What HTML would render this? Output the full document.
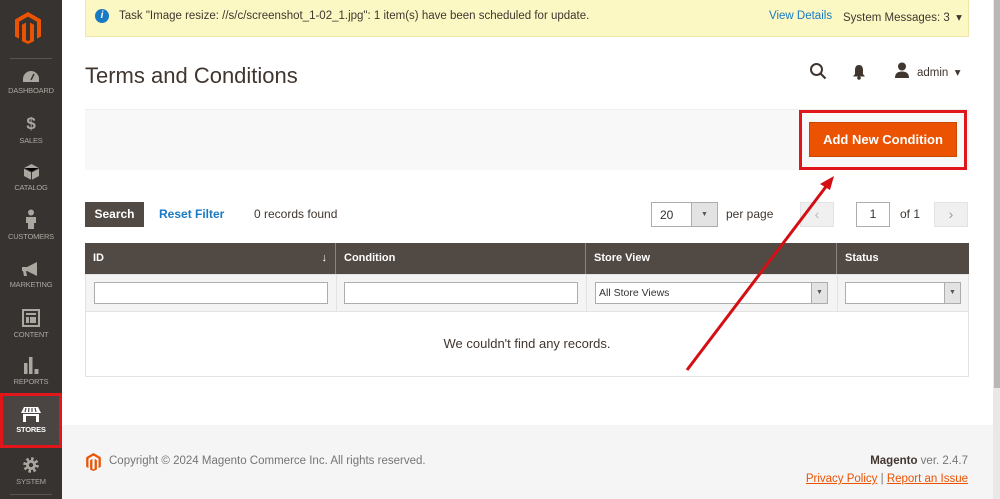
<!DOCTYPE html>
<html><head><meta charset="utf-8"><style>
*{margin:0;padding:0;box-sizing:border-box}
body{width:1000px;height:499px;overflow:hidden;background:#fff;font-family:"Liberation Sans",sans-serif;position:relative;color:#333}
.a{position:absolute}
#side{left:0;top:0;width:62px;height:499px;background:#373330}
.nav{position:absolute;left:0;width:62px;text-align:center;color:#aaa6a0;font-size:7.5px;letter-spacing:-0.2px}
.nav svg{display:block;margin:0 auto 3px}
.hd{top:243px;height:31px;background:#514943;color:#fff;font-size:11px;font-weight:bold;line-height:31px;padding-left:8px;border-right:1px solid #8a837f}
.inp{background:#fff;border:1px solid #adadad;height:22px}
.dd{position:absolute;right:0;top:0;width:16px;height:20px;background:#e3e3e3;border-left:1px solid #adadad;font-size:7px;text-align:center;line-height:20px;color:#555}
</style></head><body>
<div id="side" class="a">
 <svg class="a" style="left:15px;top:12px" width="26" height="32" viewBox="0 0 26 32"><path d="M13 0L0 7.5V24.5l4 2.3V9.8L13 4.6l9 5.2v17l4-2.3V7.5zM11 10.5l-4 2.3v16.5L13 32l6-2.7V12.8l-4-2.3v17.5l-2 1.1-2-1.1z" fill="#eb5202"/></svg>
 <div class="a" style="left:10px;top:58px;width:42px;height:1px;background:#5a5450"></div>
 <div class="nav" style="top:70px"><svg width="18" height="13" viewBox="0 0 18 13"><path d="M9 1A8 8 0 0 0 1 9v3h16V9A8 8 0 0 0 9 1z" fill="#aaa6a0"/><path d="M9 10L12 4" stroke="#373330" stroke-width="1.5"/></svg>DASHBOARD</div>
 <div class="nav" style="top:115px"><div style="font-size:17px;font-weight:bold;line-height:17px;margin-bottom:4px">$</div>SALES</div>
 <div class="nav" style="top:164px"><svg width="15" height="16" viewBox="0 0 15 16"><path d="M7.5 0L15 4v8l-7.5 4L0 12V4z" fill="#aaa6a0"/><path d="M0 4l7.5 4 7.5-4M7.5 8v8" stroke="#373330" stroke-width="1"/></svg>CATALOG</div>
 <div class="nav" style="top:209px"><svg width="12" height="20" viewBox="0 0 12 20"><circle cx="6" cy="3.5" r="3" fill="#aaa6a0"/><path d="M1 8h10v6H9v6H3v-6H1z" fill="#aaa6a0"/></svg>CUSTOMERS</div>
 <div class="nav" style="top:262px"><svg width="20" height="15" viewBox="0 0 20 15"><path d="M1 5h5l10-5v14L6 9H5l1 5H3L2 9H1z" fill="#aaa6a0"/></svg>MARKETING</div>
 <div class="nav" style="top:309px"><svg width="18" height="18" viewBox="0 0 18 18"><rect x="1" y="1" width="16" height="16" fill="none" stroke="#aaa6a0" stroke-width="2"/><rect x="4" y="4" width="10" height="2" fill="#aaa6a0"/><rect x="4" y="8" width="3" height="6" fill="#aaa6a0"/><rect x="8" y="8" width="6" height="6" fill="#aaa6a0"/></svg>CONTENT</div>
 <div class="nav" style="top:356px"><svg width="18" height="18" viewBox="0 0 18 18"><rect x="2" y="7" width="3.5" height="11" fill="#aaa6a0"/><rect x="7" y="1" width="3.5" height="17" fill="#aaa6a0"/><rect x="12.5" y="13" width="4" height="5" fill="#aaa6a0"/></svg>REPORTS</div>
 <div class="a" style="left:0;top:393px;width:62px;height:55px;background:#4a4542;border:3px solid #e0161b"></div>
 <div class="nav" style="top:407px;color:#fff;font-weight:bold"><svg width="20" height="15" viewBox="0 0 20 15"><path d="M3 0h14l3 6H0z" fill="#fff"/><path d="M5 1L4 5M8 1L7.5 5M11 1v4M14 1l1 4" stroke="#4a4542" stroke-width="1.2"/><path d="M2 7h16v8H2z" fill="#fff"/><rect x="5" y="9" width="10" height="6" fill="#4a4542"/></svg>STORES</div>
 <div class="nav" style="top:456px"><svg width="18" height="18" viewBox="0 0 18 18"><circle cx="9" cy="9" r="6" fill="none" stroke="#aaa6a0" stroke-width="3.5" stroke-dasharray="2.4 2.3"/><circle cx="9" cy="9" r="5" fill="#aaa6a0"/><circle cx="9" cy="9" r="2.2" fill="#373330"/></svg>SYSTEM</div>
 <div class="a" style="left:10px;top:494px;width:42px;height:1px;background:#5a5450"></div>
</div>

<div class="a" style="left:85px;top:0;width:884px;height:37px;background:#fcf8c4;border:1px solid #eee8a8;border-top:none"></div>
<div class="a" style="left:95px;top:9px;width:14px;height:14px;border-radius:50%;background:#1979c3;color:#fff;font-size:10px;font-weight:bold;text-align:center;line-height:14px;font-style:italic">i</div>
<div class="a" style="left:119px;top:10px;font-size:11.5px;color:#41362f">Task "Image resize: //s/c/screenshot_1-02_1.jpg": 1 item(s) have been scheduled for update.</div>
<div class="a" style="left:769px;top:10px;font-size:11.5px;color:#1979c3">View Details</div>
<div class="a" style="left:843px;top:10px;font-size:11.5px;color:#41362f">System Messages: 3 &nbsp;▾</div>

<div class="a" style="left:85px;top:63px;font-size:22px;color:#41362f">Terms and Conditions</div>
<svg class="a" style="left:809px;top:62px" width="18" height="18" viewBox="0 0 18 18"><circle cx="7.5" cy="7.5" r="5.5" fill="none" stroke="#41362f" stroke-width="2"/><path d="M11.5 11.5L16.5 16.5" stroke="#41362f" stroke-width="2.2"/></svg>
<svg class="a" style="left:852px;top:64px" width="14" height="16" viewBox="0 0 14 16"><path d="M7 1C4 1 3 3.5 3 6v4L1 12.5h12L11 10V6c0-2.5-1-5-4-5z" fill="#41362f"/><circle cx="7" cy="14" r="1.8" fill="#41362f"/></svg>
<svg class="a" style="left:894px;top:62px" width="16" height="16" viewBox="0 0 16 16"><circle cx="8" cy="4.5" r="4" fill="#41362f"/><path d="M1 16c0-5 3-6.5 7-6.5s7 1.5 7 6.5z" fill="#41362f"/></svg>
<div class="a" style="left:917px;top:65px;font-size:11.5px;color:#41362f">admin &nbsp;▾</div>

<div class="a" style="left:85px;top:109px;width:884px;height:61px;background:#f8f8f8;border-top:1px solid #eee"></div>
<div class="a" style="left:799px;top:110px;width:168px;height:60px;border:3px solid #e0161b"></div>
<div class="a" style="left:809px;top:122px;width:148px;height:35px;background:#eb5202;border:1px solid #c94800;color:#fff;font-size:13px;font-weight:bold;text-align:center;line-height:33px">Add New Condition</div>

<div class="a" style="left:85px;top:202px;width:59px;height:25px;background:#514943;color:#fff;font-size:12px;font-weight:bold;text-align:center;line-height:25px">Search</div>
<div class="a" style="left:159px;top:207px;font-size:12px;font-weight:bold;color:#1979c3">Reset Filter</div>
<div class="a" style="left:254px;top:207px;font-size:12px;color:#41362f">0 records found</div>

<div class="a inp" style="left:651px;top:202px;width:67px;height:25px"><span style="position:absolute;left:8px;top:5px;font-size:12px">20</span><div class="dd" style="width:26px;height:23px;line-height:23px">▼</div></div>
<div class="a" style="left:726px;top:207px;font-size:12px;color:#41362f">per page</div>
<div class="a" style="left:800px;top:202px;width:34px;height:25px;background:#f0f0f0;border:1px solid #e3e3e3;color:#bbb;text-align:center;line-height:23px;font-size:14px">‹</div>
<div class="a inp" style="left:856px;top:202px;width:34px;height:25px;text-align:center;line-height:23px;font-size:12px">1</div>
<div class="a" style="left:900px;top:207px;font-size:12px;color:#41362f">of 1</div>
<div class="a" style="left:934px;top:202px;width:34px;height:25px;background:#f0f0f0;border:1px solid #e3e3e3;color:#999;text-align:center;line-height:23px;font-size:14px">›</div>

<div class="a hd" style="left:85px;width:251px">ID<span style="position:absolute;right:8px;font-weight:normal">↓</span></div>
<div class="a hd" style="left:336px;width:250px">Condition</div>
<div class="a hd" style="left:586px;width:251px">Store View</div>
<div class="a hd" style="left:837px;width:132px;border-right:none">Status</div>
<div class="a" style="left:85px;top:274px;width:884px;height:38px;background:#f4f4f4;border:1px solid #e3e3e3"></div>
<div class="a" style="left:336px;top:274px;width:1px;height:38px;background:#e3e3e3"></div>
<div class="a" style="left:586px;top:274px;width:1px;height:38px;background:#e3e3e3"></div>
<div class="a" style="left:837px;top:274px;width:1px;height:38px;background:#e3e3e3"></div>
<div class="a inp" style="left:94px;top:282px;width:234px"></div>
<div class="a inp" style="left:344px;top:282px;width:234px"></div>
<div class="a inp" style="left:595px;top:282px;width:233px"><span style="position:absolute;left:3px;top:4px;font-size:10.5px;color:#333">All Store Views</span><div class="dd">▼</div></div>
<div class="a inp" style="left:845px;top:282px;width:116px"><div class="dd">▼</div></div>
<div class="a" style="left:85px;top:311px;width:884px;height:66px;border:1px solid #e3e3e3;border-top:none;text-align:center;line-height:66px;font-size:13px;color:#41362f">We couldn't find any records.</div>

<div class="a" style="left:62px;top:425px;width:931px;height:74px;background:#f5f5f5"></div>
<svg class="a" style="left:86px;top:453px" width="15" height="18" viewBox="0 0 26 32"><path d="M13 0L0 7.5V24.5l4 2.3V9.8L13 4.6l9 5.2v17l4-2.3V7.5zM11 10.5l-4 2.3v16.5L13 32l6-2.7V12.8l-4-2.3v17.5l-2 1.1-2-1.1z" fill="#eb5202"/></svg>
<div class="a" style="left:109px;top:455px;font-size:11.5px;color:#757575">Copyright © 2024 Magento Commerce Inc. All rights reserved.</div>
<div class="a" style="right:32px;top:455px;font-size:11.5px;color:#757575"><b style="color:#41362f">Magento</b> ver. 2.4.7</div>
<div class="a" style="right:32px;top:473px;font-size:11.5px;color:#757575"><u style="color:#eb5202">Privacy Policy</u> | <u style="color:#eb5202">Report an Issue</u></div>

<div class="a" style="left:993px;top:0;width:7px;height:499px;background:#e8e8e8"></div>
<div class="a" style="left:994px;top:0;width:6px;height:388px;background:#b8b8b8"></div>

<svg class="a" style="left:0;top:0" width="1000" height="499"><path d="M687 370L828 184" stroke="#d40f14" stroke-width="3"/><path d="M834 176L820 184L830 190z" fill="#d40f14"/></svg>
</body></html>
